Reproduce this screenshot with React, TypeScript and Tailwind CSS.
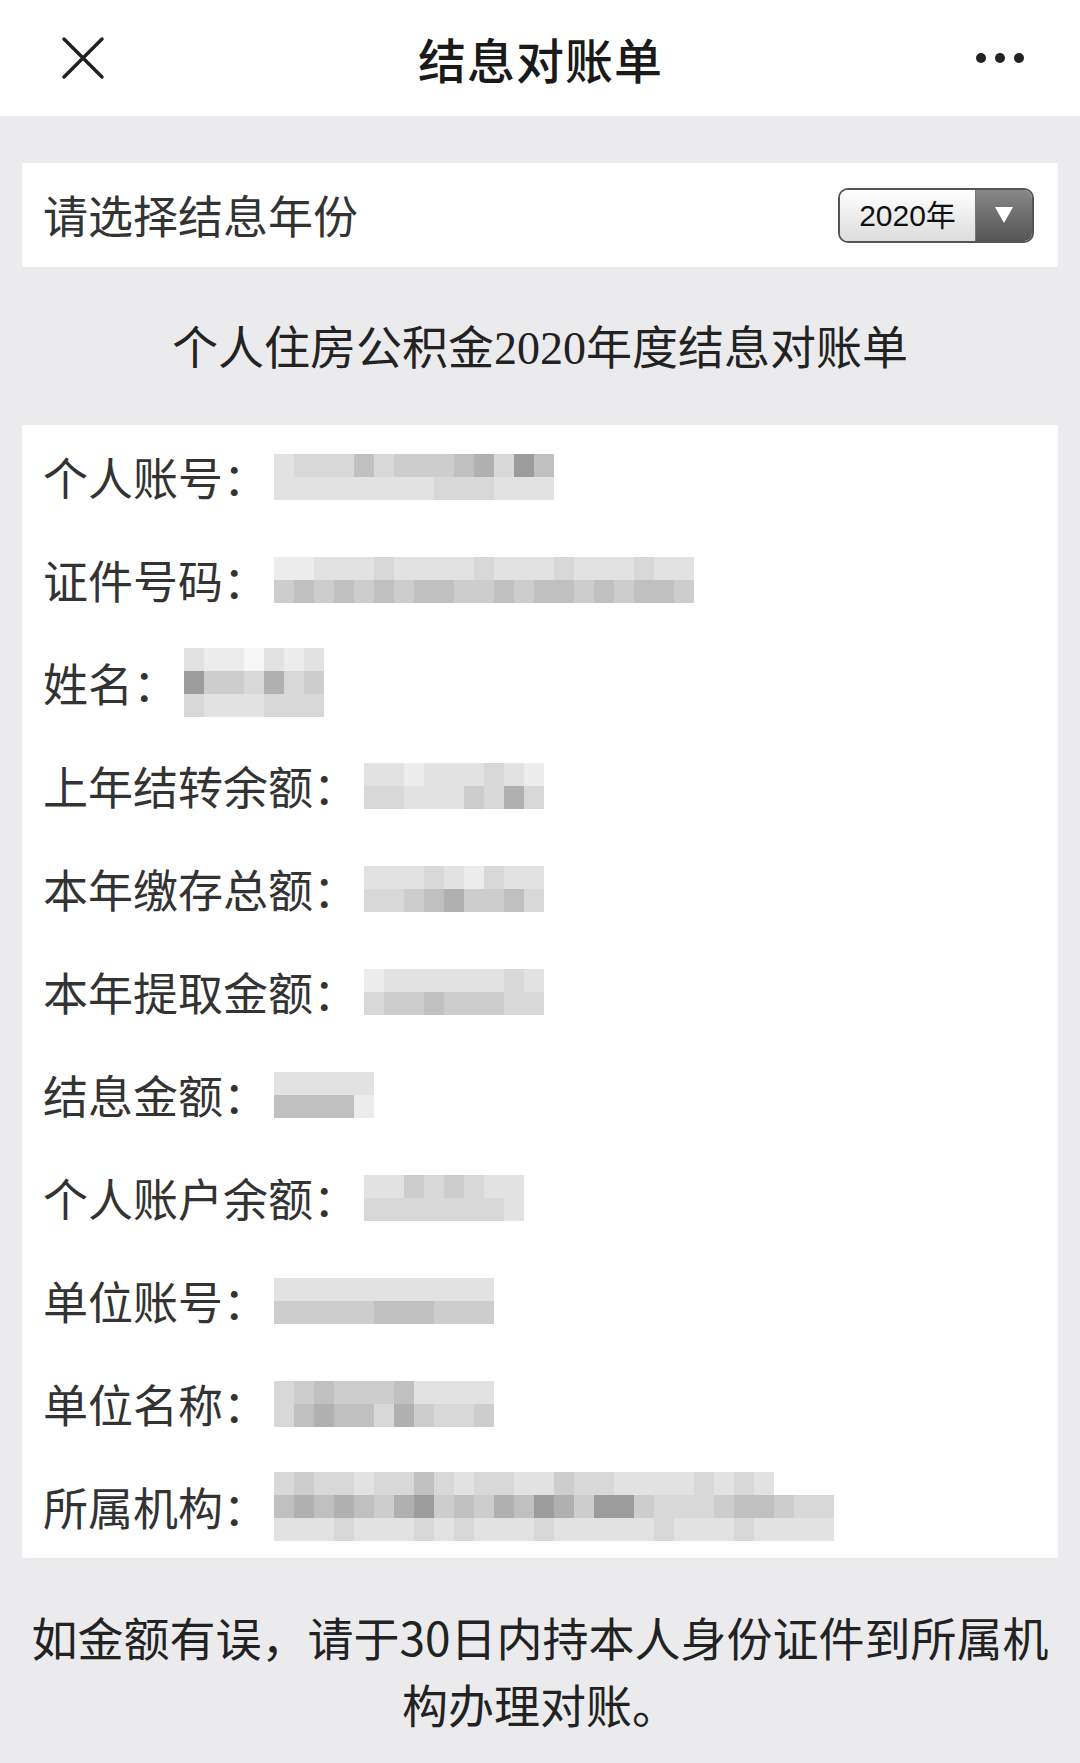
import React from "react";

const shades = [
  "bg-[#f6f6f6]",
  "bg-[#ececec]",
  "bg-[#e2e2e2]",
  "bg-[#d8d8d8]",
  "bg-[#cdcdcd]",
  "bg-[#c0c0c0]",
  "bg-[#b0b0b0]",
  "bg-[#9c9c9c]",
];

// blurred values, one string of shade digits per block row
const rows = [
  { label: "个人账号：", blocks: ["23335344456375", "22222222333222"] },
  { label: "证件号码：", blocks: ["112223222232223222322", "454545455445455454554"] },
  { label: "姓名：", blocks: ["2110212", "7443634", "3222333"] },
  { label: "上年结转余额：", blocks: ["221222321", "332224363"] },
  { label: "本年缴存总额：", blocks: ["222321322", "334564453"] },
  { label: "本年提取金额：", blocks: ["122222232", "344544433"] },
  { label: "结息金额：", blocks: ["22222", "55551"] },
  { label: "个人账户余额：", blocks: ["22434322", "33333332"] },
  { label: "单位账号：", blocks: ["22222222222", "44444555444"] },
  { label: "单位名称：", blocks: ["34544452222", "35655364334"] },
  {
    label: "所属机构：",
    blocks: ["3433233532332243322223232", "5656546745465764774333455433", "2223222323222322222322232222"],
  },
];

function Pixels({ blocks }: { blocks: string[] }) {
  return (
    <div className="flex flex-col">
      {blocks.map((r, i) => (
        <div key={i} className="flex">
          {r.split("").map((c, j) => (
            <div key={j} className={`w-[20px] h-[23px] ${shades[Number(c)]}`} />
          ))}
        </div>
      ))}
    </div>
  );
}

export default function App() {
  return (
    <div
      className="w-[1080px] h-[1763px] bg-[#ebebed] text-[#333]"
      style={{ fontFamily: '"Noto Sans CJK SC", "Noto Sans", sans-serif' }}
    >
      {/* Header */}
      <div className="h-[116px] bg-white flex items-center justify-between px-[60px]">
        <svg width="44" height="44" viewBox="0 0 44 44" className="ml-[1px]">
          <path d="M3 3L41 41M41 3L3 41" stroke="#222" strokeWidth="3.5" strokeLinecap="round" />
        </svg>
        <h1 className="text-[48px] font-medium text-[#1a1a1a] tracking-[1px]">结息对账单</h1>
        <div className="flex gap-[9px] mr-[-4px]">
          <span className="w-[10px] h-[10px] rounded-full bg-[#222]" />
          <span className="w-[10px] h-[10px] rounded-full bg-[#222]" />
          <span className="w-[10px] h-[10px] rounded-full bg-[#222]" />
        </div>
      </div>

      {/* Year select */}
      <div className="mt-[47px] mx-[22px] h-[104px] bg-white flex items-center justify-between pl-[21px] pr-[24px]">
        <span className="text-[45px] text-[#333]">请选择结息年份</span>
        <div className="flex h-[55px] w-[196px] rounded-[10px] border-2 border-[#555] overflow-hidden">
          <div
            className="flex-1 flex items-center justify-center bg-gradient-to-b from-white to-[#dcdcdc] text-[30px] text-[#111] border-r border-[#777]"
            style={{ fontFamily: '"Liberation Sans", "Noto Sans CJK SC", sans-serif' }}
          >
            2020年
          </div>
          <div className="w-[56px] flex items-center justify-center bg-gradient-to-b from-[#888] to-[#555]">
            <svg width="20" height="18" viewBox="0 0 20 18">
              <path d="M1 1H19L10 17Z" fill="white" />
            </svg>
          </div>
        </div>
      </div>

      {/* Title */}
      <div className="h-[158px] flex items-center justify-center">
        <h2 className="text-[46px] text-[#222]">
          个人住房公积金<span style={{ fontFamily: '"Liberation Serif", serif' }}>2020</span>年度结息对账单
        </h2>
      </div>

      {/* Info card */}
      <div className="mx-[22px] bg-white pl-[21px]">
        {rows.map((r) => (
          <div key={r.label} className="h-[103px] flex items-center">
            <span className="text-[45px] text-[#333] leading-none">{r.label}</span>
            <div className="ml-[6px]">
              <Pixels blocks={r.blocks} />
            </div>
          </div>
        ))}
      </div>

      {/* Footer note */}
      <p className="mt-[45px] px-[28px] text-center text-[46px] leading-[67px] text-[#222]">
        如金额有误，请于30日内持本人身份证件到所属机构办理对账。
      </p>
    </div>
  );
}
